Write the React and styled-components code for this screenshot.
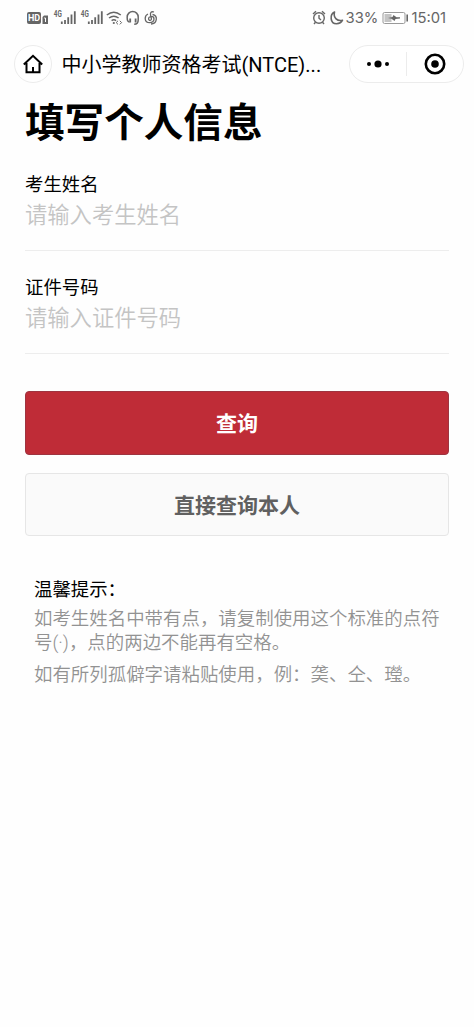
import React from "react";
import styled, { createGlobalStyle } from "styled-components";

const hints = [
  "如考生姓名中带有点，请复制使用这个标准的点符号(·)，点的两边不能再有空格。",
  "如有所列孤僻字请粘贴使用，例：䶮、仝、㼆。",
];

const fields = [
  { id: 1, label: "考生姓名", placeholder: "请输入考生姓名" },
  { id: 2, label: "证件号码", placeholder: "请输入证件号码" },
];

function Signal() {
  return (
    <svg width="26.5" height="18" viewBox="0 0 26.5 18">
      <SignalText x="0.8" y="7.8" textLength="8" lengthAdjust="spacingAndGlyphs">
        4G
      </SignalText>
      <path
        d="M8.8 12.5V15M12 11v4M15.2 8.3V15M18.5 5.5V15M21.8 2.2V15"
        stroke="#666"
        strokeWidth="1.8"
      />
    </svg>
  );
}

function StatusBar() {
  return (
    <StatusWrapper>
      <StatusLeft>
        <svg width="26" height="18" viewBox="0 0 26 18">
          <rect x="0" y="3" width="14" height="12" rx="2" fill="#666" />
          <HdText x="1" y="12.4">
            HD
          </HdText>
          <path d="M15.5 8l1.5-1.5h4V15h-5.5z" fill="#666" />
          <path d="M17.2 9h1.3v4" fill="none" stroke="#fff" />
        </svg>
        <Signal />
        <Signal />
        <svg width="20" height="18" viewBox="0 0 20 18">
          <g fill="none" stroke="#666" strokeWidth="1.5">
            <path d="M.8 6q7-5.5 14 0M3 9q4.8-3.7 9.6 0M5.6 11.7q2.3-1.7 4.5 0" />
            <path d="M12 11.8l-1.8 1.8 1.8 1.8M13.8 11.8l1.8 1.8-1.8 1.8" strokeWidth="1" />
          </g>
          <circle cx="7.8" cy="14" r="1.1" fill="#666" />
        </svg>
        <svg width="18" height="18" viewBox="0 0 18 18">
          <g fill="none" stroke="#666" strokeWidth="1.5">
            <path d="M3.5 13C.8 12.5 1.2 10 1.2 8a5.5 5.5 0 0 1 11 0v3c0 3-1.5 4.3-4 4.3" />
            <path d="M4.2 9.5v4M9.6 9.5v4" strokeWidth="1.8" />
          </g>
        </svg>
        <svg width="14" height="18" viewBox="0 0 14 18">
          <path
            d="M10 3C7 2 6 4 6.6 6.5l.8 3.2c.3 2-2.8 2.2-2.8 0C4.6 6.8 10 6.5 10 10c0 5-8.5 5-8.8-.3C1.1 7 2.5 5.7 4 5M8.5 5.5c6 1 4.5 9.5-1.5 9.5"
            fill="none"
            stroke="#666"
            strokeWidth="1.3"
          />
        </svg>
      </StatusLeft>
      <StatusRight>
        <svg width="17" height="18" viewBox="0 0 17 18">
          <g fill="none" stroke="#666" strokeWidth="1.4">
            <circle cx="7" cy="9" r="5.3" />
            <path d="M7 6v3.3l2 1.7M1 5l3-2.7M13 5l-3-2.7M3.5 13.3L2 15M10.5 13.3L12 15" />
          </g>
        </svg>
        <svg width="16.5" height="18" viewBox="0 0 16.5 18">
          <path
            d="M5.5 3C.5 5.5 1 14.7 7.5 14.7c3 0 5-1.3 6-3.5C8.5 12.5 4 9 5.5 3z"
            fill="none"
            stroke="#666"
            strokeWidth="1.6"
            strokeLinejoin="round"
          />
        </svg>
        <StatusText $width={32}>33%</StatusText>
        <Battery width="27" height="18" viewBox="0 0 27 18">
          <rect x="1" y="3.5" width="22" height="11" rx="1.5" fill="#fff" stroke="#999" />
          <rect x="2.5" y="5" width="7" height="8" fill="#c4c4c4" />
          <path d="M6 9l4.5-1 1-2 3 2.2H18v1.4l-4.5.3-1 2L9.5 9.8z" fill="#666" />
          <path d="M25.2 5.5v7" stroke="#666" strokeWidth="1.6" />
        </Battery>
        <StatusText $width={35.5}>15:01</StatusText>
      </StatusRight>
    </StatusWrapper>
  );
}

function NavBar() {
  return (
    <NavWrapper>
      <HomeButton aria-label="home">
        <svg width="22" height="22" viewBox="0 0 22 22">
          <path
            d="M1.8 11.5L11 2.8l9.2 8.7M4.5 10v9.2h13V10M11 19v-5"
            fill="none"
            stroke="#000"
            strokeWidth="2"
          />
        </svg>
      </HomeButton>
      <NavTitle>中小学教师资格考试(NTCE)...</NavTitle>
      <Capsule>
        <CapsuleItem>
          <svg width="24" height="10" viewBox="0 0 24 10">
            <circle cx="3" cy="5" r="2" />
            <circle cx="12" cy="5" r="3.6" />
            <circle cx="21" cy="5" r="2" />
          </svg>
        </CapsuleItem>
        <CapsuleDivider />
        <CapsuleItem $last>
          <svg width="22" height="22" viewBox="0 0 22 22">
            <circle cx="11" cy="11" r="9.2" fill="none" stroke="#000" strokeWidth="2.6" />
            <circle cx="11" cy="11" r="3.8" />
          </svg>
        </CapsuleItem>
      </Capsule>
    </NavWrapper>
  );
}

export default function App() {
  return (
    <>
      <GlobalStyle />
      <Page>
        <StatusBar />
        <NavBar />
        <Content>
          <Title>填写个人信息</Title>
          {fields.map((field) => {
            return (
              <Field key={field.id}>
                <Label>{field.label}</Label>
                <Input type="text" placeholder={field.placeholder} />
              </Field>
            );
          })}
          <Buttons>
            <Button $primary>查询</Button>
            <Button>直接查询本人</Button>
          </Buttons>
          <Tips>
            <TipsTitle>温馨提示：</TipsTitle>
            {hints.map((hint) => {
              return <TipsText key={hint}>{hint}</TipsText>;
            })}
          </Tips>
        </Content>
      </Page>
    </>
  );
}

const GlobalStyle = createGlobalStyle`
  * {
    box-sizing: border-box;
  }

  body {
    margin: 0;
    background: #fefefe;
    font-family: "Noto Sans CJK SC", sans-serif;
  }
`;

const Page = styled.div`
  width: 474px;
  height: 1027px;
  overflow: hidden;
`;

const StatusWrapper = styled.div`
  display: flex;
  align-items: center;
  justify-content: space-between;
  height: 36px;
  padding: 0 27px;
`;

const StatusLeft = styled.div`
  display: flex;
  align-items: center;
`;

const StatusRight = styled(StatusLeft)``;

const SignalText = styled.text`
  font: bold 8.5px "Roboto", sans-serif;
  fill: #666;
`;

const HdText = styled.text`
  font: bold 9px "Roboto", sans-serif;
  fill: #fff;
`;

const StatusText = styled.span`
  width: ${(props) => props.$width}px;
  font-family: "Inter", sans-serif;
  font-size: 14.8px;
  line-height: 18px;
  color: #666;
  white-space: nowrap;
`;

const Battery = styled.svg`
  margin: 0 3px 0 4px;
`;

const NavWrapper = styled.div`
  display: flex;
  align-items: center;
  height: 56px;
  padding: 0 10px 0 14px;
`;

const HomeButton = styled.button`
  display: flex;
  align-items: center;
  justify-content: center;
  width: 38px;
  height: 38px;
  padding: 0;
  border: 1px solid #ececec;
  border-radius: 50%;
  background: #fff;
`;

const NavTitle = styled.div`
  flex: 1;
  margin-left: 9.5px;
  padding-top: 2px;
  font-family: "Roboto", "Noto Sans CJK SC", sans-serif;
  font-size: 20px;
  font-weight: 400;
  line-height: 30px;
  white-space: nowrap;
`;

const Capsule = styled.div`
  display: flex;
  align-items: center;
  width: 115px;
  height: 38px;
  border: 1px solid #ececec;
  border-radius: 19px;
  background: #fff;
`;

const CapsuleItem = styled.div`
  flex: 1;
  display: flex;
  align-items: center;
  justify-content: center;
  padding-left: ${(props) => (props.$last ? 1 : 0)}px;
`;

const CapsuleDivider = styled.div`
  width: 1px;
  height: 24px;
  background: #ececec;
`;

const Content = styled.div`
  padding: 0 25px;
`;

const Title = styled.h1`
  margin: 0 0 22px;
  font-size: 39.6px;
  font-weight: 700;
  line-height: 56px;
`;

const Field = styled.div`
  height: 81px;
  margin-bottom: 22px;
  border-bottom: 1px solid #ededed;
`;

const Label = styled.label`
  display: block;
  font-size: 18.4px;
  line-height: 26px;
`;

const Input = styled.input`
  display: block;
  width: 100%;
  height: 34px;
  padding: 0;
  border: 0;
  background: none;
  font-family: inherit;
  font-size: 22.3px;
  font-weight: 350;

  &::placeholder {
    color: #c4c4c4;
  }
`;

const Buttons = styled.div`
  display: flex;
  flex-direction: column;
  gap: 18px;
  padding-top: 15px;
`;

const Button = styled.button`
  height: ${(props) => (props.$primary ? 64 : 63)}px;
  padding: 0 0 2px;
  border: 1px solid ${(props) => (props.$primary ? "#9e3440" : "#e6e6e6")};
  border-radius: 4px;
  background: ${(props) => (props.$primary ? "#bf2c37" : "#fafafa")};
  color: ${(props) => (props.$primary ? "#fff" : "#606060")};
  font-family: inherit;
  font-size: 21px;
  font-weight: 700;
`;

const Tips = styled.div`
  padding: 38px 0 0 9px;
`;

const TipsTitle = styled.div`
  margin-bottom: 5px;
  font-size: 18.4px;
  line-height: 28px;
`;

const TipsText = styled.p`
  margin: 0 0 8px;
  color: #929292;
  font-family: "Roboto", "Noto Sans CJK SC", sans-serif;
  font-size: 18.45px;
  font-weight: 350;
  line-height: 24px;
`;
